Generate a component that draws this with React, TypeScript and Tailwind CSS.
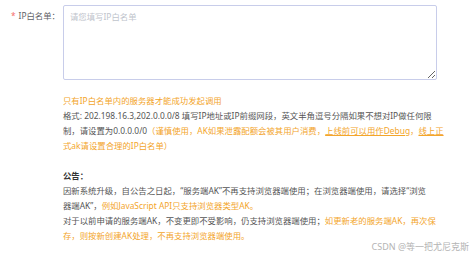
import React from "react";

const O = "text-[#f3a52b]";

export default function App() {
  return (
    <div
      className="relative w-[474px] h-[256px] bg-white overflow-hidden text-[8.4px] leading-[15px] text-[#555]"
      style={{ fontFamily: '"Noto Sans", "Noto Sans CJK SC", sans-serif' }}
    >
      <div className="flex pt-[5px]">
        <div className="w-[63px] flex justify-end pr-[3px] pt-[3px] text-[#606266] leading-[15px]">
          <span className="text-[#f56c6c] mr-[3px]">*</span>
          <span>IP白名单：</span>
        </div>
        <div className="flex flex-col">
          <textarea
            className="w-[374px] h-[75px] border border-[#c8cdea] rounded-[2px] px-[6px] py-[3px] text-[8.4px] leading-[15px] outline-none placeholder:text-[#c0c4cc]"
            placeholder="请您填写IP白名单"
          />
          <div className="mt-[13px] whitespace-nowrap">
            <div className={O}>只有IP白名单内的服务器才能成功发起调用</div>
            <div>格式: 202.198.16.3,202.0.0.0/8 填写IP地址或IP前缀网段，英文半角逗号分隔如果不想对IP做任何限</div>
            <div>
              制，请设置为0.0.0.0/0
              <span className={O}>
                （谨慎使用，AK如果泄露配额会被其用户消费，<span className="underline">上线前可以用作Debug</span>，<span className="underline">线上正</span>
              </span>
            </div>
            <div className={O}>式ak请设置合理的IP白名单）</div>
            <div className="mt-[15px] font-bold text-[#333]">公告：</div>
            <div>因新系统升级，自公告之日起，“服务端AK”不再支持浏览器端使用；在浏览器端使用，请选择“浏览</div>
            <div>
              器端AK”，<span className={O}>例如JavaScript API只支持浏览器类型AK。</span>
            </div>
            <div>
              对于以前申请的服务端AK，不变更即不受影响，仍支持浏览器端使用；<span className={O}>如更新老的服务端AK，再次保</span>
            </div>
            <div className={O}>存，则按新创建AK处理，不再支持浏览器端使用。</div>
          </div>
        </div>
      </div>
      <div className="absolute right-[5px] bottom-[2px] text-[9px] text-[#b4b4b4] whitespace-nowrap">
        CSDN @等一把尤尼克斯
      </div>
    </div>
  );
}
